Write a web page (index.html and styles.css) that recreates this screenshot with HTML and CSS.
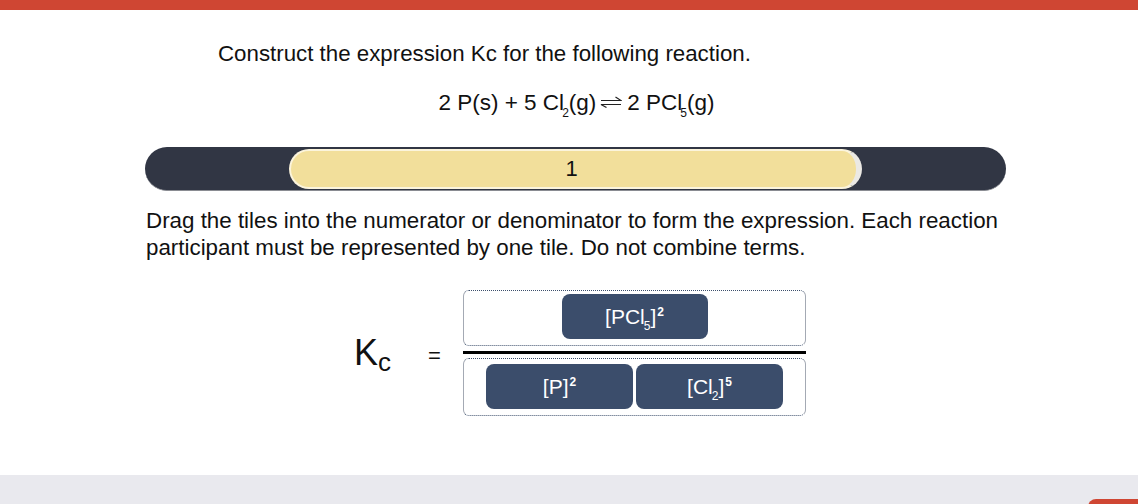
FILE: index.html
```html
<!DOCTYPE html>
<html lang="en">
<head>
<meta charset="utf-8">
<title>Kc expression</title>
<link rel="stylesheet" href="styles.css">
</head>
<body>
<div class="page">
  <div class="topbar"></div>
  <main class="content">
    <p class="title">Construct the expression Kc for the following reaction.</p>
    <p class="equation">2 P(s) + 5 Cl<sub class="lo">2</sub>(g)<svg class="eq-arrow" width="22" height="12" viewBox="0 0 22 12"><path d="M1 4.5H21L15.5 1" fill="none" stroke="#222" stroke-width="1.2"/><path d="M21 8.5H1L6.5 11.5" fill="none" stroke="#222" stroke-width="1.2"/></svg>2 PCl<sub class="lo">5</sub>(g)</p>
    <div class="track"><div class="pill">1</div></div>
    <p class="instructions">Drag the tiles into the numerator or denominator to form the expression. Each reaction participant must be represented by one tile. Do not combine terms.</p>
    <div class="expr">
      <div class="kc">K<span class="kc-sub">c</span></div>
      <div class="equals">=</div>
      <div class="fraction">
        <div class="slot slot-num">
          <div class="tile"><span class="tile-text">[PCl<sub class="tsub">5</sub>]<sup class="tsup">2</sup></span></div>
        </div>
        <div class="frac-line"></div>
        <div class="slot slot-den">
          <div class="tile"><span class="tile-text">[P]<sup class="tsup">2</sup></span></div>
          <div class="tile"><span class="tile-text">[Cl<sub class="tsub">2</sub>]<sup class="tsup">5</sup></span></div>
        </div>
      </div>
    </div>
  </main>
  <footer class="footer"><div class="footer-btn"></div></footer>
</div>
</body>
</html>
```
FILE: styles.css
```css
* { box-sizing: border-box; }
html, body { margin: 0; padding: 0; background: #fff; }
body { font-family: "Liberation Sans", Arial, sans-serif; color: #111; }
.page { width: 1138px; height: 504px; display: flex; flex-direction: column; overflow: hidden; }
.topbar { height: 10px; background: #cf4633; flex: none; }
.content { flex: 1; width: 861px; margin-left: 145px; display: flex; flex-direction: column; }
.title { margin: 31px 0 0 73px; font-size: 22.3px; line-height: 26px; }
.equation { margin: 23px 0 0 0; font-size: 22.5px; line-height: 26px; text-align: center; padding-left: 2px; }
.equation .lo { font-size: 12px; vertical-align: -7px; line-height: 0; margin-left: -2px; }
.eq-arrow { margin: 0 5px 0 4px; vertical-align: 2px; }
.track { margin-top: 31px; height: 44px; flex: none; background: #313644; border-radius: 22px; border-bottom: 1px solid #8a8c92; display: flex; justify-content: center; align-items: center; }
.pill { width: 573px; height: 40px; background: #f2df9b; border-radius: 20px; border: 2px solid #fbf4dc; border-right: 6px solid #ebe9e4; display: flex; align-items: center; justify-content: center; font-size: 22px; padding-right: 4px; }
.instructions { margin: 16px 0 0 1px; font-size: 22.35px; line-height: 27px; }
.expr { margin-top: 29px; display: flex; align-items: center; }
.kc { margin: 8px 0 0 209px; font-size: 36px; line-height: 40px; width: 50px; }
.kc-sub { font-size: 26px; vertical-align: -6px; }
.equals { font-size: 22px; width: 35px; margin: 6px 0 0 24px; }
.fraction { width: 343px; display: flex; flex-direction: column; }
.slot { border-top: 1px dotted #3d4f6c; border-bottom: 1px dotted #3d4f6c; border-left: 1px solid #a4aab4; border-right: 1px solid #a4aab4; border-radius: 6px; display: flex; justify-content: center; gap: 3px; }
.slot-num { height: 56px; padding: 3px 0 0 0; }
.slot-num .tile { width: 146px; }
.frac-line { height: 3px; background: #000; margin: 5px 0 4px; }
.slot-den { height: 58px; padding-top: 5px; }
.slot-den .tile { width: 147px; }
.tile { height: 45px; background: #3b4d6b; border-radius: 8px; color: #fff; font-size: 21px; display: flex; align-items: center; justify-content: center; }
.tile-text { display: block; line-height: 24px; }
.tsub { font-size: 12px; vertical-align: -6px; line-height: 0; margin-left: -1px; }
.tsup { font-size: 12px; vertical-align: 8px; line-height: 0; margin-left: 1px; font-weight: bold; }
.footer { height: 29px; flex: none; background: #e9e9ee; position: relative; }
.footer-btn { position: absolute; left: 1088px; top: 24px; width: 60px; height: 20px; background: #cf4633; border-top-left-radius: 8px; }
```
